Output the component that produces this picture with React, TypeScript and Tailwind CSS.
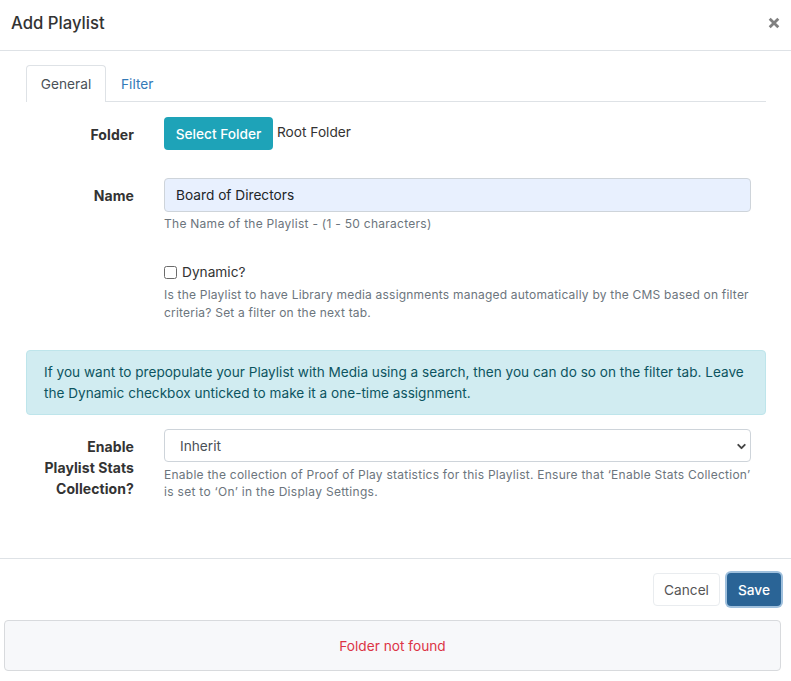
import { ChevronDown } from "lucide-react";

const font = { fontFamily: "Inter, 'Liberation Sans', sans-serif" };

function Row({ label, className, children }: { label?: React.ReactNode; className?: string; children: React.ReactNode }) {
  return (
    <div className={`flex ${className ?? ""}`}>
      <div className="w-[108px] shrink-0 text-right text-[14px] font-bold leading-[21px] tracking-[0.08px] text-[#333]">{label}</div>
      <div className="ml-[30px] w-[587px]">{children}</div>
    </div>
  );
}

function Help({ className, children }: { className: string; children: React.ReactNode }) {
  return <p className={`mt-[3px] text-[12px] leading-[18px] text-[#6c757d] ${className}`}>{children}</p>;
}

export default function App() {
  return (
    <div className="h-[681px] w-[791px] overflow-hidden bg-white text-[13.7px] text-[#212529]" style={font}>
      {/* header */}
      <div className="flex h-[51px] items-center justify-between border-b border-[#dee2e6] pb-[4px] pl-[11px] pr-[11px]">
        <h1 className="text-[16.7px] font-medium leading-[24px] text-[#333]">Add Playlist</h1>
        <svg width="12" height="12" viewBox="0 0 12 12">
          <path d="M1.7 1.7 L10.3 10.3 M10.3 1.7 L1.7 10.3" stroke="#808080" strokeWidth="2.8" />
        </svg>
      </div>

      {/* body */}
      <div className="h-[507px] px-[26px] pt-[14px]">
        <div className="flex h-[37px] w-[740px] border-b border-[#dee2e6]">
          <div className="h-[37px] w-[80px] rounded-t border border-b-0 border-[#dee2e6] bg-white pt-[8px] text-center leading-[21px] text-[#495057]">General</div>
          <div className="pl-[15px] pt-[9px] leading-[21px] text-[#337ab7]">Filter</div>
        </div>

        <Row label={<span className="mt-[7px] block">Folder</span>} className="mt-[15px] h-[61px]">
          <div className="flex items-start">
            <button className="h-[33px] w-[109px] rounded bg-[#1ea3b8] pt-[1px] text-[13.7px] font-medium text-white">Select Folder</button>
            <span className="ml-[4px] mt-[5px] leading-[21px] text-[#333]">Root Folder</span>
          </div>
        </Row>

        <Row label={<span className="mt-[7px] block">Name</span>} className="h-[87px]">
          <div className="flex h-[34px] items-center rounded border border-[#ced4da] bg-[#e8f0fe] px-[11px] text-[#212529]">Board of Directors</div>
          <Help className="tracking-[0.27px]">The Name of the Playlist - (1 - 50 characters)</Help>
        </Row>

        <Row className="h-[85px]">
          <label className="-mt-[3px] flex items-center leading-[21px] text-[#333]">
            <input type="checkbox" className="h-[13px] w-[13px] appearance-none rounded-[2.5px] border border-[#6b6b6b] bg-white" />
            <span className="ml-[5px]">Dynamic?</span>
          </label>
          <Help className="tracking-[0.21px]">Is the Playlist to have Library media assignments managed automatically by the CMS based on filter criteria? Set a filter on the next tab.</Help>
        </Row>

        <div className="h-[65px] w-[740px] rounded border border-[#bee5eb] bg-[#d1ecf1] pl-[17px] pr-[14px] pt-[10.5px] text-[13.6px] leading-[21px] text-[#0c5460]">
          If you want to prepopulate your Playlist with Media using a search, then you can do so on the filter tab. Leave the Dynamic checkbox unticked to make it a one-time assignment.
        </div>

        <Row
          label={<span className="mt-[7px] block">Enable<br />Playlist Stats<br />Collection?</span>}
          className="mt-[14px]"
        >
          <div className="flex h-[33px] items-center justify-between rounded border border-[#ced4da] bg-white pl-[15px] pr-[2px] pt-[1px] text-[#495057]">
            Inherit
            <ChevronDown size={13} strokeWidth={3.5} className="text-[#444]" />
          </div>
          <Help className="pt-[1px] tracking-[0.25px]">
            Enable the collection of Proof of Play statistics for this Playlist. Ensure that ‘Enable Stats Collection’
            <br />
            <span className="-mt-[1px] block tracking-[0.3px]">is set to ‘On’ in the Display Settings.</span>
          </Help>
        </Row>
      </div>

      {/* footer */}
      <div className="flex h-[62px] items-start justify-end gap-[7px] border-t border-[#dee2e6] pr-[10px] pt-[14px]">
        <button className="h-[33px] w-[67px] rounded border border-[#e9ecef] bg-white pt-[1px] text-[13.7px] text-[#555]">Cancel</button>
        <button className="h-[33px] w-[54px] rounded bg-[#2a6496] pt-[1px] text-[13.7px] font-medium text-white shadow-[0_0_0_2px_#9fc0dd]">Save</button>
      </div>

      <div className="ml-[4px] flex h-[51px] w-[777px] items-center justify-center rounded border border-[#d8dadd] bg-[#f7f8fa] pt-[1px] text-[#dc3545]">
        Folder not found
      </div>
    </div>
  );
}
